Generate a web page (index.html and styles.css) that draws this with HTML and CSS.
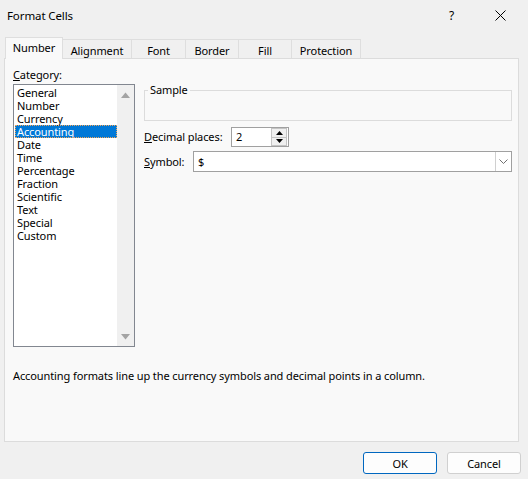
FILE: index.html
```html
<!DOCTYPE html>
<html>
<head>
<meta charset="utf-8">
<link rel="stylesheet" href="styles.css">
</head>
<body>
<div class="window">
  <div class="titlebar">
    <span class="title">Format Cells</span>
    <span class="help">?</span>
    <span class="close"><svg width="11" height="11" viewBox="0 0 11 11"><path d="M0.5 0.5 L10.5 10.5 M10.5 0.5 L0.5 10.5" stroke="#000" stroke-width="1" fill="none"/></svg></span>
  </div>
  <div class="tabs">
    <div class="tab active">Number</div>
    <div class="tab w-align">Alignment</div>
    <div class="tab w-font">Font</div>
    <div class="tab w-border">Border</div>
    <div class="tab w-fill">Fill</div>
    <div class="tab w-prot">Protection</div>
  </div>
  <div class="panel">
    <div class="main">
      <div class="left">
        <div class="cat-label"><u>C</u>ategory:</div>
        <div class="listbox">
          <ul class="items">
            <li>General</li>
            <li>Number</li>
            <li>Currency</li>
            <li class="selected">Accounting</li>
            <li>Date</li>
            <li>Time</li>
            <li>Percentage</li>
            <li>Fraction</li>
            <li>Scientific</li>
            <li>Text</li>
            <li>Special</li>
            <li>Custom</li>
          </ul>
          <div class="scrollbar">
            <svg width="9" height="6" viewBox="0 0 9 6"><path d="M0 6 L4.5 0.5 L9 6 Z" fill="#a3a3a3"/></svg>
            <svg width="9" height="6" viewBox="0 0 9 6"><path d="M0 0 L4.5 5.5 L9 0 Z" fill="#a3a3a3"/></svg>
          </div>
        </div>
      </div>
      <div class="right">
        <div class="sample">
          <span class="sample-label">Sample</span>
        </div>
        <div class="row dec-row">
          <label class="lbl dec-lbl"><u>D</u>ecimal places:</label>
          <div class="spin">
            <span class="spin-val">2</span>
            <div class="spin-btns">
              <div class="spin-btn"><svg width="7" height="4" viewBox="0 0 7 4"><path d="M0 4 L3.5 0 L7 4 Z" fill="#000"/></svg></div>
              <div class="spin-btn"><svg width="7" height="4" viewBox="0 0 7 4"><path d="M0 0 L3.5 4 L7 0 Z" fill="#000"/></svg></div>
            </div>
          </div>
        </div>
        <div class="row sym-row">
          <label class="lbl sym-lbl"><u>S</u>ymbol:</label>
          <div class="select">
            <span class="select-val">$</span>
            <div class="select-btn"><svg width="9" height="5" viewBox="0 0 9 5"><path d="M0.5 0.5 L4.5 4.5 L8.5 0.5" stroke="#707070" stroke-width="1" fill="none"/></svg></div>
          </div>
        </div>
      </div>
    </div>
    <p class="desc">Accounting formats line up the currency symbols and decimal points in a column.</p>
  </div>
  <div class="buttons">
    <button class="btn ok">OK</button>
    <button class="btn">Cancel</button>
  </div>
</div>
</body>
</html>
```
FILE: styles.css
```css
* { box-sizing: border-box; }
html, body {
  margin: 0;
  padding: 0;
  background: #f0f0f0;
}
body {
  font-family: "Noto Sans", "Open Sans", sans-serif;
  font-size: 11px;
  letter-spacing: -0.1px;
  color: #000;
  white-space: nowrap;
}
.window {
  width: 528px;
  height: 479px;
  display: flex;
  flex-direction: column;
}
.titlebar {
  height: 30px;
  display: flex;
  align-items: center;
  padding-left: 7px;
}
.title {
  flex: 1;
  font-size: 11.5px;
}
.help {
  font-size: 12px;
  width: 12px;
  margin-right: 34px;
}
.close {
  display: flex;
  margin-right: 22px;
}
.tabs {
  margin-top: 7px;
  height: 21px;
  display: flex;
  align-items: flex-end;
  padding-left: 5px;
  position: relative;
  z-index: 1;
}
.tab {
  height: 19px;
  background: #f0f0f0;
  border: 1px solid #dedede;
  border-bottom: none;
  border-left: none;
  display: flex;
  justify-content: center;
  align-items: center;
  padding-top: 3px;
  line-height: 14px;
}
.tab.active {
  width: 58px;
  height: 22px;
  margin-bottom: -1px;
  background: #f9f9f9;
  border-left: 1px solid #dedede;
  padding-top: 0;
  padding-bottom: 1px;
}
.w-align { width: 69px; }
.w-font { width: 54px; }
.w-border { width: 53px; }
.w-fill { width: 53px; }
.w-prot { width: 69px; }
.panel {
  margin-left: 4px;
  width: 515px;
  height: 384px;
  background: #f9f9f9;
  border: 1px solid #dcdcdc;
  padding: 9px 6px 0 8px;
}
.main {
  display: flex;
  gap: 9px;
}
.left { width: 122px; }
.cat-label {
  line-height: 14px;
  height: 14px;
}
.listbox {
  margin-top: 2px;
  height: 263px;
  border: 1px solid #828790;
  background: #fff;
  display: flex;
}
.items {
  list-style: none;
  margin: 0;
  padding: 1px 0 0 1px;
  flex: 1;
}
.items li {
  height: 13px;
  line-height: 14px;
  padding-left: 2px;
}
.items li.selected {
  background: #0078d7;
  color: #fff;
  outline: 1px dotted #f2a65a;
  outline-offset: -1px;
}
.scrollbar {
  width: 17px;
  background: #f0f0f0;
  display: flex;
  flex-direction: column;
  justify-content: space-between;
  align-items: center;
  padding: 7px 0 6px 0;
}
.right {
  flex: 1;
  padding-top: 22px;
}
.sample {
  height: 31px;
  border: 1px solid #dcdcdc;
  position: relative;
}
.sample-label {
  position: absolute;
  left: 3px;
  top: -8px;
  padding: 0 2px;
  background: #f9f9f9;
  line-height: 14px;
}
.row {
  display: flex;
  align-items: center;
}
.lbl { line-height: 14px; }
.dec-row { margin-top: 6px; }
.dec-lbl { width: 87px; }
.spin {
  width: 58px;
  height: 20px;
  border: 1px solid #a0a0a0;
  background: #fff;
  display: flex;
  align-items: center;
}
.spin-val {
  flex: 1;
  padding-left: 4px;
  line-height: 14px;
}
.spin-btns {
  width: 16px;
  height: 18px;
  display: flex;
  flex-direction: column;
  margin-right: 1px;
}
.spin-btn {
  flex: 1;
  background: #f0f0f0;
  border: 1px solid #c4c4c4;
  display: flex;
  align-items: center;
  justify-content: center;
}
.spin-btn + .spin-btn { border-top: none; }
.sym-row { margin-top: 4px; }
.sym-lbl { width: 49px; }
.select {
  flex: 1;
  height: 21px;
  border: 1px solid #a0a0a0;
  background: #fff;
  display: flex;
  align-items: center;
}
.select-val {
  flex: 1;
  padding-left: 4px;
  line-height: 14px;
}
.select-btn {
  width: 16px;
  height: 19px;
  border-left: 1px solid #d0d0d0;
  display: flex;
  align-items: center;
  justify-content: center;
}
.desc {
  margin: 22px 0 0 0;
  line-height: 14px;
}
.buttons {
  display: flex;
  justify-content: flex-end;
  gap: 10px;
  margin-top: 10px;
  padding-right: 7px;
}
.btn {
  width: 74px;
  height: 22px;
  font-family: inherit;
  font-size: 11px;
  letter-spacing: -0.1px;
  color: #000;
  background: #fdfdfd;
  border: 1px solid #d0d0d0;
  border-radius: 3px;
  padding: 0;
}
.btn.ok {
  border-color: #0067c0;
}
```
